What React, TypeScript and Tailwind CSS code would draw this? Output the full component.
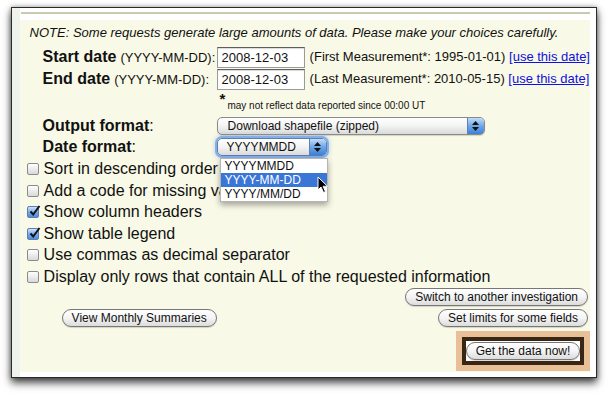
import React from "react";

// Aqua-ish stepper arrows on the right of a popup button
const Stepper = () => (
  <div className="w-[17px] self-stretch rounded-r-[4px] bg-gradient-to-b from-[#c3dcf7] via-[#6fa6e8] to-[#3c80d6] border-l border-[#5b82b5] flex flex-col items-center justify-center gap-[2px]">
    <svg width="7" height="4" viewBox="0 0 7 4">
      <path d="M3.5 0 L7 4 L0 4 Z" fill="#111" />
    </svg>
    <svg width="7" height="4" viewBox="0 0 7 4">
      <path d="M0 0 L7 0 L3.5 4 Z" fill="#111" />
    </svg>
  </div>
);

const Checkbox = ({ checked }: { checked?: boolean }) => (
  <div
    className={
      checked
        ? "relative w-[12px] h-[12px] rounded-[2px] border border-[#5c7fae] bg-gradient-to-b from-[#cfe3fa] via-[#79aceb] to-[#4b8ddf] shrink-0"
        : "relative w-[12px] h-[12px] rounded-[2px] border border-[#8b8b8b] bg-gradient-to-b from-white to-[#d9d9d9] shrink-0"
    }
  >
    {checked && (
      <svg
        className="absolute left-[1px] top-[-2px]"
        width="12"
        height="12"
        viewBox="0 0 12 12"
      >
        <path
          d="M1.5 6.5 L4.2 9.5 L10.5 1"
          stroke="#111"
          strokeWidth="2"
          fill="none"
        />
      </svg>
    )}
  </div>
);

const PillButton = ({ children }: { children: React.ReactNode }) => (
  <button className="h-[18px] px-[9px] rounded-full border border-[#777] bg-gradient-to-b from-white via-[#f4f4f4] to-[#dcdcdc] text-[12px] leading-[16px] text-[#111] shadow-[0_1px_1px_rgba(0,0,0,0.15)] whitespace-nowrap">
    {children}
  </button>
);

const options = [
  { label: "Sort in descending order", checked: false },
  { label: "Add a code for missing values", checked: false },
  { label: "Show column headers", checked: true },
  { label: "Show table legend", checked: true },
  { label: "Use commas as decimal separator", checked: false },
  {
    label: "Display only rows that contain ALL of the requested information",
    checked: false,
  },
];

export default function App() {
  return (
    <div className="relative w-[607px] h-[394px] bg-white pt-[7px] pl-[11px] overflow-hidden font-['Liberation_Sans',Arial,sans-serif] text-[#111]">
      {/* window */}
      <div className="w-[586px] h-[371px] border border-[#2a2a2a] bg-white flex shadow-[0_5px_8px_rgba(0,0,0,0.7),0_0_5px_rgba(0,0,0,0.35)]">
        <div className="w-[9px] bg-[#eef3ec]" />
        <div className="flex-1 flex flex-col">
          <div className="h-[4px]" />
          <div className="h-[2px] ml-[1px] mr-[6px] bg-[#c9caae]" />
          <div className="h-[6px]" />

          {/* form area */}
          <div className="flex-1 mr-[6px] bg-[#f8f9e6] flex flex-col">
            <div className="pt-[5px] pl-[10px] h-[26px] text-[13px] leading-[16px] italic">
              NOTE: Some requests generate large amounts of data. Please make
              your choices carefully.
            </div>

            {/* start date */}
            <div className="flex items-center h-[22px]">
              <div className="w-[197px] pl-[23px] flex items-baseline whitespace-nowrap">
                <span className="text-[16px] font-bold">Start date</span>
                <span className="text-[13px] ml-[4px]">(YYYY-MM-DD):</span>
              </div>
              <div className="w-[88px] h-[21px] bg-white border border-[#9a9a9a] border-t-[#5e5e5e] shadow-[inset_0_1px_1px_rgba(0,0,0,0.15)] text-[13px] leading-[19px] pl-[4px]">
                2008-12-03
              </div>
              <span className="text-[13px] ml-[5px] whitespace-nowrap">
                (First Measurement*: 1995-01-01){" "}
                <a className="text-[#1010e0] underline">[use this date]</a>
              </span>
            </div>

            {/* end date */}
            <div className="flex items-center h-[22px]">
              <div className="w-[197px] pl-[23px] flex items-baseline whitespace-nowrap">
                <span className="text-[16px] font-bold">End date</span>
                <span className="text-[13px] ml-[4px]">(YYYY-MM-DD):</span>
              </div>
              <div className="w-[88px] h-[21px] bg-white border border-[#9a9a9a] border-t-[#5e5e5e] shadow-[inset_0_1px_1px_rgba(0,0,0,0.15)] text-[13px] leading-[19px] pl-[4px]">
                2008-12-03
              </div>
              <span className="text-[13px] ml-[5px] whitespace-nowrap">
                (Last Measurement*: 2010-05-15){" "}
                <a className="text-[#1010e0] underline">[use this date]</a>
              </span>
            </div>

            {/* footnote */}
            <div className="h-[25px] pl-[200px] pt-[3px] flex items-start">
              <span className="text-[15px] font-bold leading-[12px]">*</span>
              <span className="text-[10px] leading-[12px] mt-[7px] ml-[2px] whitespace-nowrap">
                may not reflect data reported since 00:00 UT
              </span>
            </div>

            {/* output format */}
            <div className="flex items-center h-[20px] mt-[1px]">
              <div className="w-[197px] pl-[23px] text-[16px] leading-[18px]">
                <span className="font-bold">Output format</span>:
              </div>
              <div className="w-[268px] h-[18px] rounded-[5px] border border-[#8a8a8a] bg-gradient-to-b from-white via-[#f3f3f3] to-[#dadada] flex items-center shadow-[0_1px_1px_rgba(0,0,0,0.15)]">
                <span className="flex-1 text-[12px] leading-[16px] pl-[10px]">
                  Download shapefile (zipped)
                </span>
                <Stepper />
              </div>
            </div>

            {/* date format */}
            <div className="flex items-center h-[20px] mt-[1px] relative z-10">
              <div className="w-[197px] pl-[23px] text-[16px] leading-[18px]">
                <span className="font-bold">Date format</span>:
              </div>
              <div className="relative">
                <div className="w-[110px] h-[18px] rounded-[5px] border border-[#5a7fb7] bg-gradient-to-b from-white via-[#f3f3f3] to-[#dadada] flex items-center shadow-[0_0_0_2px_rgba(110,160,230,0.75),0_0_4px_2px_rgba(110,160,230,0.5)]">
                  <span className="flex-1 text-[12px] leading-[16px] pl-[9px]">
                    YYYYMMDD
                  </span>
                  <Stepper />
                </div>
                {/* open menu */}
                <div className="absolute left-[3px] top-[20px] w-[108px] bg-white border border-[#b5b5b5] shadow-[0_3px_6px_rgba(0,0,0,0.35)] text-[12px] leading-[14px]">
                  <div className="pl-[4px] h-[14px]">YYYYMMDD</div>
                  <div className="pl-[4px] h-[14px] bg-[#3a76d6] text-white">
                    YYYY-MM-DD
                  </div>
                  <div className="pl-[4px] h-[14px]">YYYY/MM/DD</div>
                </div>
                {/* mouse pointer */}
                <svg
                  className="absolute left-[100px] top-[38px]"
                  width="12"
                  height="18"
                  viewBox="0 0 12 18"
                >
                  <path
                    d="M1 1 L1 14 L4 11 L6.5 16.5 L8.5 15.6 L6.1 10.3 L10.5 10.3 Z"
                    fill="#000"
                    stroke="#fff"
                    strokeWidth="1"
                    strokeLinejoin="round"
                  />
                </svg>
              </div>
            </div>

            {/* checkboxes */}
            <div className="flex flex-col mt-[1px]">
              {options.map((o, i) => (
                <div
                  key={o.label}
                  className={
                    i % 2 === 0
                      ? "flex items-center h-[22px] pl-[7px] gap-[5px]"
                      : "flex items-center h-[21px] pl-[7px] gap-[5px]"
                  }
                >
                  <Checkbox checked={o.checked} />
                  <span className="text-[16px] leading-[18px] whitespace-nowrap">
                    {o.label}
                  </span>
                </div>
              ))}
            </div>

            {/* buttons */}
            <div className="flex justify-end pr-[2px] mt-[1px]">
              <PillButton>Switch to another investigation</PillButton>
            </div>
            <div className="flex justify-between items-center pr-[2px] pl-[42px] mt-[3px]">
              <PillButton>View Monthly Summaries</PillButton>
              <PillButton>Set limits for some fields</PillButton>
            </div>
            <div className="flex justify-end mt-[4px]">
              <div className="w-[134px] h-[40px] bg-[#e9bf98] flex items-center justify-center">
                <div className="w-[122px] h-[28px] border-[4px] border-[#3a2614] bg-white flex items-center justify-center">
                  <PillButton>Get the data now!</PillButton>
                </div>
              </div>
            </div>
          </div>

          <div className="h-[5px]" />
        </div>
      </div>
    </div>
  );
}
